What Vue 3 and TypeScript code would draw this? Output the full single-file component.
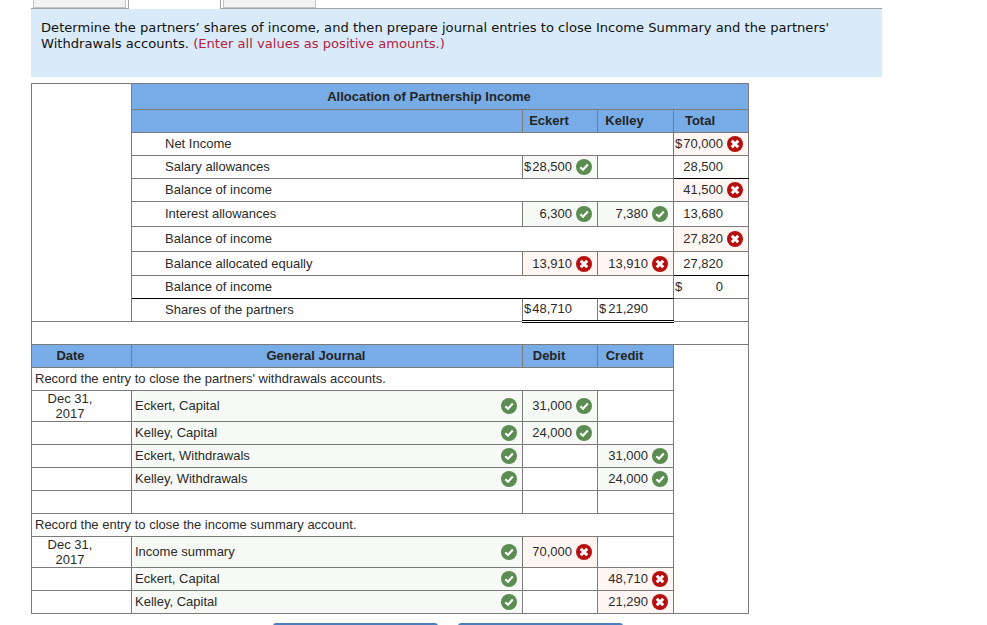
<script setup lang="ts">
type Mark = 'ok' | 'bad' | ''
interface Amount { text: string; mark?: Mark; dollar?: boolean; total?: boolean }
interface AllocRow {
  label: string
  span: boolean
  eckert?: Amount
  kelley?: Amount
  total?: Amount
  h: string
  labelCls?: string
  totalCls?: string
}

const allocation: AllocRow[] = [
  { label: 'Net Income', span: true, total: { text: '70,000', mark: 'bad', dollar: true }, h: 'h23' },
  { label: 'Salary allowances', span: false, eckert: { text: '28,500', mark: 'ok', dollar: true }, total: { text: '28,500' }, h: 'h23', totalCls: 'bot-black' },
  { label: 'Balance of income', span: true, total: { text: '41,500', mark: 'bad' }, h: 'h23' },
  { label: 'Interest allowances', span: false, eckert: { text: '6,300', mark: 'ok' }, kelley: { text: '7,380', mark: 'ok' }, total: { text: '13,680' }, h: 'h25' },
  { label: 'Balance of income', span: true, total: { text: '27,820', mark: 'bad' }, h: 'h25' },
  { label: 'Balance allocated equally', span: false, eckert: { text: '13,910', mark: 'bad' }, kelley: { text: '13,910', mark: 'bad' }, total: { text: '27,820' }, h: 'h24', totalCls: 'bot-black' },
  { label: 'Balance of income', span: true, total: { text: '0', dollar: true }, h: 'h23', labelCls: 'bot-black' },
  { label: 'Shares of the partners', span: false, eckert: { text: '48,710', dollar: true, total: true }, kelley: { text: '21,290', dollar: true, total: true }, h: 'h23' },
]

interface JournalLine {
  date?: boolean
  account: string
  debit?: Amount
  credit?: Amount
  h: string
}

const journalOne: JournalLine[] = [
  { date: true, account: 'Eckert, Capital', debit: { text: '31,000', mark: 'ok' }, h: 'h31' },
  { account: 'Kelley, Capital', debit: { text: '24,000', mark: 'ok' }, h: 'h23' },
  { account: 'Eckert, Withdrawals', credit: { text: '31,000', mark: 'ok' }, h: 'h23' },
  { account: 'Kelley, Withdrawals', credit: { text: '24,000', mark: 'ok' }, h: 'h23' },
]
const journalTwo: JournalLine[] = [
  { date: true, account: 'Income summary', debit: { text: '70,000', mark: 'bad' }, h: 'h31' },
  { account: 'Eckert, Capital', credit: { text: '48,710', mark: 'bad' }, h: 'h23' },
  { account: 'Kelley, Capital', credit: { text: '21,290', mark: 'bad' }, h: 'h23' },
]

function tone(a?: Amount): string {
  if (!a || !a.mark) return ''
  return a.mark === 'ok' ? 'good' : 'wrong'
}
</script>

<template>
  <div class="page">
    <div class="tabs">
      <div class="tab"></div>
      <div class="tab active"></div>
      <div class="tab"></div>
    </div>

    <div class="prompt">
      Determine the partners’ shares of income, and then prepare journal entries to close Income Summary and the partners'<br />
      Withdrawals accounts. <span class="hint">(Enter all values as positive amounts.)</span>
    </div>

    <table class="sheet">
      <colgroup>
        <col class="c1" /><col class="c2" /><col class="c3" /><col class="c4" /><col class="c5" />
      </colgroup>
      <tbody>
        <tr class="h26">
          <td rowspan="10" class="blank"></td>
          <td colspan="4" class="head title">Allocation of Partnership Income</td>
        </tr>
        <tr class="h23">
          <td class="head"></td>
          <td class="head">Eckert</td>
          <td class="head">Kelley</td>
          <td class="head">Total</td>
        </tr>
        <tr v-for="(r, i) in allocation" :key="i" :class="r.h">
          <td :colspan="r.span ? 3 : 1" class="label" :class="r.labelCls">{{ r.label }}</td>
          <template v-if="!r.span">
            <td :class="[tone(r.eckert), r.eckert?.total ? 'dbl' : '']">
              <div v-if="r.eckert" class="amt">
                <span v-if="r.eckert.dollar" class="dollar">$</span>
                <span class="num">{{ r.eckert.text }}</span>
                <span class="slot">
                  <svg v-if="r.eckert.mark === 'ok'" class="ico" viewBox="0 0 16 16"><circle cx="8" cy="8" r="8" fill="#5b8c51" /><path d="M4.3 8.3 7 10.8 11.8 5.6" fill="none" stroke="#fff" stroke-width="2.2" /></svg>
                  <svg v-if="r.eckert.mark === 'bad'" class="ico" viewBox="0 0 16 16"><circle cx="8" cy="8" r="8" fill="#b50f0f" /><path d="M4.8 4.8 11.2 11.2M11.2 4.8 4.8 11.2" fill="none" stroke="#fff" stroke-width="3" /></svg>
                </span>
              </div>
            </td>
            <td :class="[tone(r.kelley), r.kelley?.total ? 'dbl' : '']">
              <div v-if="r.kelley" class="amt">
                <span v-if="r.kelley.dollar" class="dollar">$</span>
                <span class="num">{{ r.kelley.text }}</span>
                <span class="slot">
                  <svg v-if="r.kelley.mark === 'ok'" class="ico" viewBox="0 0 16 16"><circle cx="8" cy="8" r="8" fill="#5b8c51" /><path d="M4.3 8.3 7 10.8 11.8 5.6" fill="none" stroke="#fff" stroke-width="2.2" /></svg>
                  <svg v-if="r.kelley.mark === 'bad'" class="ico" viewBox="0 0 16 16"><circle cx="8" cy="8" r="8" fill="#b50f0f" /><path d="M4.8 4.8 11.2 11.2M11.2 4.8 4.8 11.2" fill="none" stroke="#fff" stroke-width="3" /></svg>
                </span>
              </div>
            </td>
          </template>
          <td :class="[tone(r.total), r.totalCls]">
            <div v-if="r.total" class="amt">
              <span v-if="r.total.dollar" class="dollar">$</span>
              <span class="num">{{ r.total.text }}</span>
              <span class="slot">
                <svg v-if="r.total.mark === 'bad'" class="ico" viewBox="0 0 16 16"><circle cx="8" cy="8" r="8" fill="#b50f0f" /><path d="M4.8 4.8 11.2 11.2M11.2 4.8 4.8 11.2" fill="none" stroke="#fff" stroke-width="3" /></svg>
              </span>
            </div>
          </td>
        </tr>
        <tr class="h23"><td colspan="5"></td></tr>
        <tr class="h23">
          <td class="head">Date</td>
          <td class="head">General Journal</td>
          <td class="head">Debit</td>
          <td class="head">Credit</td>
          <td rowspan="12" class="blank"></td>
        </tr>
        <tr class="h23"><td colspan="4" class="note">Record the entry to close the partners' withdrawals accounts.</td></tr>
        <tr v-for="(l, i) in journalOne" :key="'a' + i" :class="l.h">
          <td class="date"><template v-if="l.date">Dec 31,<br />2017</template></td>
          <td class="good account">
            <div class="acct">
              <span class="acct-name">{{ l.account }}</span>
              <svg class="ico" viewBox="0 0 16 16"><circle cx="8" cy="8" r="8" fill="#5b8c51" /><path d="M4.3 8.3 7 10.8 11.8 5.6" fill="none" stroke="#fff" stroke-width="2.2" /></svg>
            </div>
          </td>
          <td :class="tone(l.debit)">
            <div v-if="l.debit" class="amt">
              <span class="num">{{ l.debit.text }}</span>
              <span class="slot"><svg class="ico" viewBox="0 0 16 16"><circle cx="8" cy="8" r="8" fill="#5b8c51" /><path d="M4.3 8.3 7 10.8 11.8 5.6" fill="none" stroke="#fff" stroke-width="2.2" /></svg></span>
            </div>
          </td>
          <td :class="tone(l.credit)">
            <div v-if="l.credit" class="amt">
              <span class="num">{{ l.credit.text }}</span>
              <span class="slot"><svg class="ico" viewBox="0 0 16 16"><circle cx="8" cy="8" r="8" fill="#5b8c51" /><path d="M4.3 8.3 7 10.8 11.8 5.6" fill="none" stroke="#fff" stroke-width="2.2" /></svg></span>
            </div>
          </td>
        </tr>
        <tr class="h23"><td></td><td></td><td></td><td></td></tr>
        <tr class="h23"><td colspan="4" class="note">Record the entry to close the income summary account.</td></tr>
        <tr v-for="(l, i) in journalTwo" :key="'b' + i" :class="l.h">
          <td class="date"><template v-if="l.date">Dec 31,<br />2017</template></td>
          <td class="good account">
            <div class="acct">
              <span class="acct-name">{{ l.account }}</span>
              <svg class="ico" viewBox="0 0 16 16"><circle cx="8" cy="8" r="8" fill="#5b8c51" /><path d="M4.3 8.3 7 10.8 11.8 5.6" fill="none" stroke="#fff" stroke-width="2.2" /></svg>
            </div>
          </td>
          <td :class="tone(l.debit)">
            <div v-if="l.debit" class="amt">
              <span class="num">{{ l.debit.text }}</span>
              <span class="slot"><svg class="ico" viewBox="0 0 16 16"><circle cx="8" cy="8" r="8" fill="#b50f0f" /><path d="M4.8 4.8 11.2 11.2M11.2 4.8 4.8 11.2" fill="none" stroke="#fff" stroke-width="3" /></svg></span>
            </div>
          </td>
          <td :class="tone(l.credit)">
            <div v-if="l.credit" class="amt">
              <span class="num">{{ l.credit.text }}</span>
              <span class="slot"><svg class="ico" viewBox="0 0 16 16"><circle cx="8" cy="8" r="8" fill="#b50f0f" /><path d="M4.8 4.8 11.2 11.2M11.2 4.8 4.8 11.2" fill="none" stroke="#fff" stroke-width="3" /></svg></span>
            </div>
          </td>
        </tr>
      </tbody>
    </table>

    <div class="actions">
      <div class="btn"></div>
      <div class="btn"></div>
    </div>
  </div>
</template>

<style scoped>
.page {
  width: 987px;
  height: 625px;
  overflow: hidden;
  background: #fff;
  font-family: "Liberation Sans", Arial, sans-serif;
  color: #222;
}
.tabs {
  display: flex;
  height: 9px;
  margin-left: 31px;
  width: 851px;
  border-bottom: 1px solid #a3a3a3;
  box-sizing: border-box;
}
.tab {
  width: 93px;
  margin-left: 2px;
  background: #f2f2f2;
  border: 1px solid #c4c4c4;
  border-top: 0;
  box-sizing: border-box;
}
.tab.active {
  width: 93px;
  margin-left: 2px;
  margin-bottom: -1px;
  background: #fff;
  border: 0;
  border-left: 1px solid #a3a3a3;
  border-right: 1px solid #a3a3a3;
}
.prompt {
  margin-left: 31px;
  width: 851px;
  height: 68px;
  box-sizing: border-box;
  padding: 11px 10px 0;
  background: #d9ebf9;
  font-family: "DejaVu Sans", Verdana, sans-serif;
  font-size: 13.1px;
  line-height: 16px;
  color: #111;
}
.hint {
  color: #b3213f;
}
.sheet {
  margin: 6px 0 0 31px;
  width: 718px;
  table-layout: fixed;
  border-collapse: collapse;
  font-size: 13px;
  color: #2b2b2b;
}
.c1 { width: 100px; }
.c2 { width: 391px; }
.c3 { width: 75px; }
.c4 { width: 76px; }
.c5 { width: 75px; }
td {
  border: 1px solid #7b7b7b;
  padding: 0;
  vertical-align: middle;
  overflow: hidden;
}
.h23 { height: 23px; }
.h24 { height: 24px; }
.h25 { height: 25px; }
.h26 { height: 26px; }
.h31 { height: 31px; }
.blank { background: #fff; }
.head {
  background: #78ace6;
  font-weight: bold;
  text-align: center;
  color: #242424;
  padding: 0 22px 2px 0;
}
.head.title {
  padding-bottom: 0;
}
.label {
  padding: 0 0 2px 33px;
}
.h24 .label {
  padding-bottom: 0;
}
.note {
  padding: 0 0 2px 3px;
}
.date {
  text-align: center;
  vertical-align: top;
  line-height: 15px;
  padding: 0 23px 0 0;
}
.account {
  padding: 0 1px 0 3px;
}
.acct {
  display: flex;
  align-items: center;
  justify-content: space-between;
  margin-right: 4px;
}
.acct-name {
  margin-bottom: 2px;
}
.amt {
  display: flex;
  align-items: center;
  padding: 0 5px 0 1px;
  height: 16px;
}
.dollar {
  margin-right: auto;
  margin-bottom: 2px;
}
.num {
  margin-left: auto;
  margin-bottom: 2px;
}
.h24 .num {
  margin-bottom: 0;
}
.dollar + .num {
  margin-left: 0;
}
.slot {
  display: inline-flex;
  width: 16px;
  height: 16px;
  margin-left: 4px;
  flex: none;
}
.ico {
  width: 16px;
  height: 16px;
  display: block;
  flex: none;
}
.good { background: #f6f9f5; }
.wrong { background: #fff5f3; }
td.bot-black { border-bottom: 1px solid #000; }
td.dbl { border-bottom: 3px double #000; }
.actions {
  display: flex;
  gap: 20px;
  margin: 9px 0 0 273px;
}
.btn {
  width: 165px;
  height: 30px;
  box-sizing: border-box;
  background: #fff;
  border-top: 2px solid #4a80c0;
  border-radius: 3px 3px 0 0;
}
</style>

<style>
html, body { margin: 0; overflow: hidden; }
</style>
